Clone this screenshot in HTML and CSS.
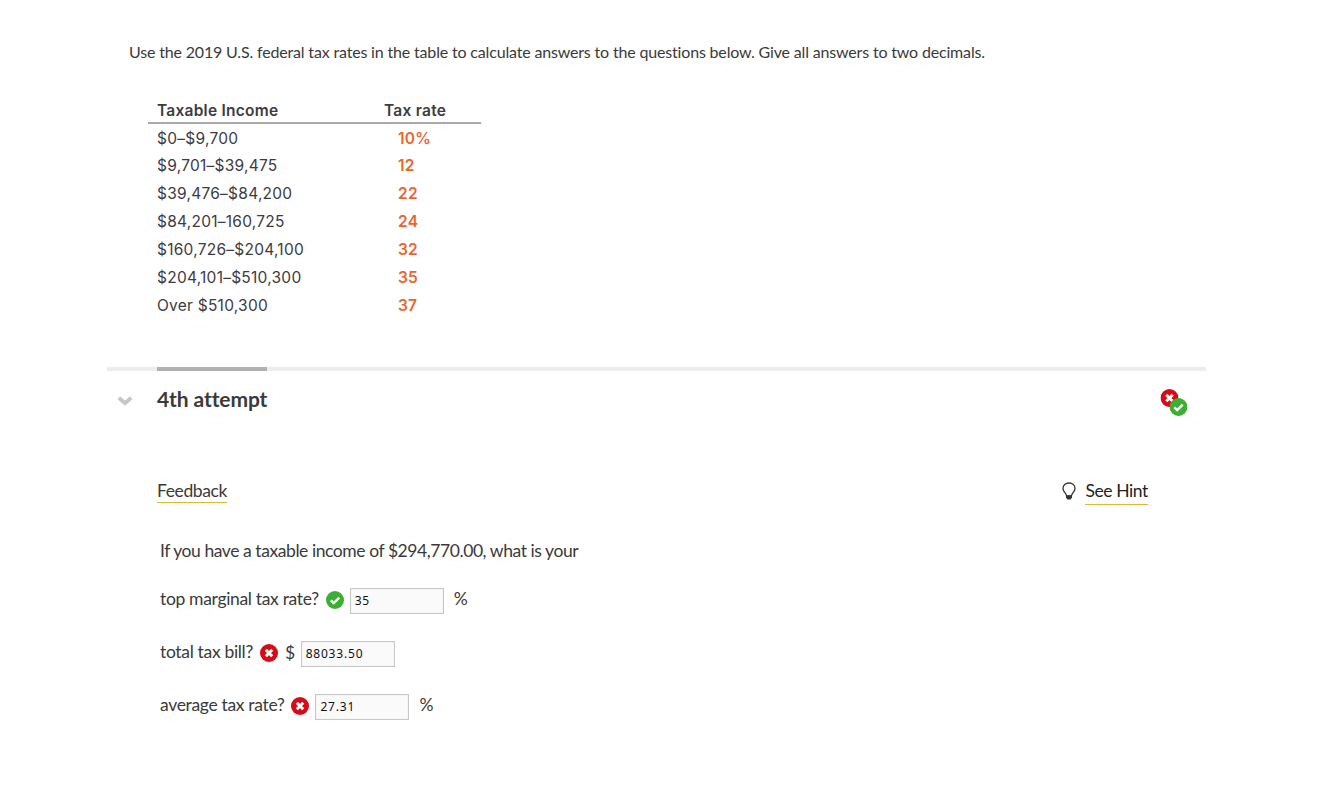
FILE: index.html
```html
<!DOCTYPE html>
<html lang="en">
<head>
    <meta charset="UTF-8">
    <meta name="viewport" content="width=device-width, initial-scale=1.0">
    <title>4th attempt</title>
    <link rel="stylesheet" href="styles.css">
</head>
<body>
    <!-- Shared icons -->
    <svg class="defs" width="0" height="0">
        <symbol id="correct" viewBox="0 0 18 18">
            <circle cx="9" cy="9" r="9" fill="#3dae34"/>
            <path d="M4.8 9.3 L7.7 12.1 L13.2 6.6" fill="none" stroke="#fff" stroke-width="2.5"/>
        </symbol>
        <symbol id="wrong" viewBox="0 0 18 18">
            <circle cx="9" cy="9" r="9" fill="#d80a18"/>
            <path d="M5.8 5.8 L12.2 12.2 M12.2 5.8 L5.8 12.2" fill="none" stroke="#fff" stroke-width="3"/>
        </symbol>
    </svg>

    <!-- Question -->
    <div class="question">
        <p class="intro">Use the 2019 U.S. federal tax rates in the table to calculate answers to the questions below. Give all answers to two decimals.</p>
        <table class="rates">
            <thead>
                <tr><th>Taxable Income</th><th class="rate-head">Tax rate</th></tr>
            </thead>
            <tbody>
                <tr><td>$0–$9,700</td><td class="rate">10%</td></tr>
                <tr><td>$9,701–$39,475</td><td class="rate">12</td></tr>
                <tr><td>$39,476–$84,200</td><td class="rate">22</td></tr>
                <tr><td>$84,201–160,725</td><td class="rate">24</td></tr>
                <tr><td>$160,726–$204,100</td><td class="rate">32</td></tr>
                <tr><td>$204,101–$510,300</td><td class="rate">35</td></tr>
                <tr><td>Over $510,300</td><td class="rate">37</td></tr>
            </tbody>
        </table>
    </div>

    <!-- Attempt -->
    <div class="attempt">
        <div class="bar"><div class="bar-active"></div></div>
        <div class="attempt-header">
            <svg class="chevron" width="16" height="10" viewBox="0 0 16 10"><path d="M1.8 1.8 L8 7.2 L14.2 1.8" fill="none" stroke="#c6c6c6" stroke-width="3.8"/></svg>
            <h2>4th attempt</h2>
            <svg class="status" width="28" height="27" viewBox="0 0 28 27">
                <use href="#wrong" x="0.5" y="0" width="18" height="18"/>
                <use href="#correct" x="9.5" y="9" width="18" height="18"/>
            </svg>
        </div>

        <div class="links">
            <a class="feedback">Feedback</a>
            <svg class="bulb" width="14" height="19" viewBox="0 0 14 19">
                <path d="M4.6 14 C4.4 11.2 1 9.8 1 6.4 C1 3.2 3.6 1 7 1 C10.4 1 13 3.2 13 6.4 C13 9.8 9.6 11.2 9.4 14 Z" fill="none" stroke="#333" stroke-width="1.3"/>
                <path d="M4 13.5 H10 V15.6 L8.6 17.4 H5.4 L4 15.6 Z" fill="#333"/>
            </svg>
            <a class="hint">See Hint</a>
        </div>

        <div class="answers">
            <p class="prompt">If you have a taxable income of $294,770.00, what is your</p>
            <div class="row">
                <label for="marginal">top marginal tax rate?</label>
                <svg class="mark" width="18" height="18"><use href="#correct"/></svg>
                <input type="text" id="marginal" value="35">
                <span class="unit">%</span>
            </div>
            <div class="row">
                <label for="total">total tax bill?</label>
                <svg class="mark" width="18" height="18"><use href="#wrong"/></svg>
                <span class="dollar">$</span>
                <input type="text" id="total" value="88033.50">
            </div>
            <div class="row">
                <label for="average">average tax rate?</label>
                <svg class="mark" width="18" height="18"><use href="#wrong"/></svg>
                <input type="text" id="average" value="27.31">
                <span class="unit">%</span>
            </div>
        </div>
    </div>
</body>
</html>
```
FILE: styles.css
```css
/* General Styles */
body {
    font-family: Lato, sans-serif;
    margin: 0;
    background-color: #fff;
    color: #3a3a3a;
    font-variant-ligatures: none;
}
.defs {
    display: block;
}

/* Question */
.question {
    height: 367px;
    padding-left: 129px;
    box-sizing: border-box;
    overflow: hidden;
}
.intro {
    margin: 40px 0 0;
    font-size: 16px;
    line-height: 24px;
    letter-spacing: -0.17px;
    white-space: nowrap;
}
.rates {
    width: 333px;
    margin: 32px 0 0 19px;
    border-collapse: collapse;
    font-family: Inter, sans-serif;
    font-size: 15.5px;
    letter-spacing: 0.25px;
    color: #3d3a42;
}
.rates th, .rates td {
    height: 27.9px;
    padding: 2px 0 0 9px;
    line-height: 25px;
    text-align: left;
    box-sizing: border-box;
}
.rates th {
    height: 27px;
    padding-top: 3px;
    line-height: 23px;
    font-weight: 600;
    border-bottom: 2px solid #a9a9ab;
}
.rates .rate-head {
    width: 105px;
    padding-left: 8px;
}
.rates .rate {
    padding-left: 22px;
    font-weight: 600;
    color: #e8662f;
}

/* Attempt */
.attempt {
    width: 1099px;
    margin-left: 107px;
}
.bar {
    height: 4px;
    padding-left: 50px;
    background-color: #ededed;
}
.bar-active {
    width: 110px;
    height: 4px;
    background-color: #b0b0b0;
}
.attempt-header {
    display: flex;
    align-items: center;
    height: 57px;
    padding: 0 18px 0 10px;
}
h2 {
    flex: 1;
    margin: -2px 0 0 24px;
    font-size: 21px;
    line-height: 28px;
    letter-spacing: -0.1px;
}
.chevron {
    margin-top: 2px;
}
.status {
    margin-top: 6px;
}

/* Links */
.links {
    display: flex;
    align-items: flex-start;
    padding: 51px 58px 0 50px;
    font-size: 17.5px;
    line-height: 24px;
    letter-spacing: -0.4px;
}
.feedback {
    height: 23px;
    margin-right: auto;
    border-bottom: 1px solid #e0b83a;
}
.bulb {
    margin: 3px 9px 0 0;
}
.hint {
    height: 25px;
    border-bottom: 1px solid #e0b83a;
    color: #222;
}

/* Answers */
.answers {
    padding: 34px 0 0 53px;
    font-size: 17.5px;
    letter-spacing: -0.43px;
}
.prompt {
    margin: 0 0 25px;
    line-height: 24px;
}
.row {
    display: flex;
    align-items: center;
    height: 26px;
    margin-bottom: 27px;
}
.row label {
    margin-top: -5px;
    letter-spacing: -0.33px;
}
.mark {
    margin: -2px 6px 0 7px;
}
.row input {
    width: 94px;
    height: 26px;
    padding: 0 4px 1px;
    border: 1px solid #c8c8c8;
    box-sizing: border-box;
    background-color: #fafafa;
    box-shadow: inset 0 0 1px #c8c8c8;
    font-family: "Noto Sans", sans-serif;
    font-size: 12px;
    letter-spacing: 0.8px;
    color: #111;
}
.unit {
    margin: -5px 0 0 10px;
}
.dollar {
    margin: -4px 6px 0 1px;
}
```
